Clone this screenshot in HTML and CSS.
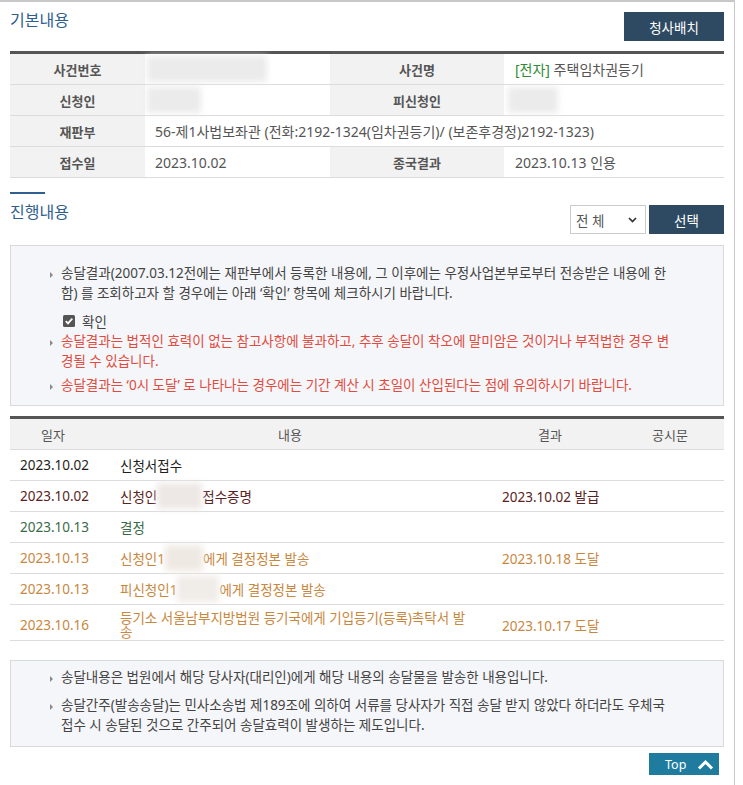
FILE: index.html
```html
<!DOCTYPE html>
<html lang="ko">
<head>
<meta charset="utf-8">
<title>사건 진행내용</title>
<link rel="stylesheet" href="styles.css">
</head>
<body>
<div class="page">
  <div class="sec-head">
    <h2 class="sec-title">기본내용</h2>
    <button class="btn-navy btn-wide" type="button">청사배치</button>
  </div>

  <div class="info-table">
    <div class="info-row">
      <div class="th">사건번호</div>
      <div class="td td-blur"><span class="blur blur-case"></span></div>
      <div class="th">사건명</div>
      <div class="td td-r"><span class="green">[전자]</span>&nbsp;주택임차권등기</div>
    </div>
    <div class="info-row">
      <div class="th">신청인</div>
      <div class="td td-blur"><span class="blur blur-app"></span></div>
      <div class="th">피신청인</div>
      <div class="td td-blur"><span class="blur blur-resp"></span></div>
    </div>
    <div class="info-row">
      <div class="th">재판부</div>
      <div class="td span3">56-제1사법보좌관 (전화:2192-1324(임차권등기)/ (보존후경정)2192-1323)</div>
    </div>
    <div class="info-row">
      <div class="th">접수일</div>
      <div class="td">2023.10.02</div>
      <div class="th">종국결과</div>
      <div class="td td-r">2023.10.13 인용</div>
    </div>
  </div>

  <div class="sec-head2">
    <div class="title2"><h2 class="sec-title">진행내용</h2></div>
    <div class="controls">
      <div class="select"><span>전 체</span>
        <svg class="sel-chev" width="9" height="6" viewBox="0 0 9 6"><path d="M1 1 L4.5 4.5 L8 1" fill="none" stroke="#333" stroke-width="1.7"/></svg>
      </div>
      <button class="btn-navy btn-sel" type="button">선택</button>
    </div>
  </div>

  <div class="notice">
    <ul class="notes">
      <li>송달결과(2007.03.12전에는 재판부에서 등록한 내용에, 그 이후에는 우정사업본부로부터 전송받은 내용에 한<br>함) 를 조회하고자 할 경우에는 아래 ‘확인’ 항목에 체크하시기 바랍니다.</li>
    </ul>
    <label class="chk">
      <svg class="chk-box" width="12" height="12" viewBox="0 0 12 12"><rect x="0" y="0" width="12" height="12" rx="1.5" fill="#555"/><path d="M2.8 6.2 L5 8.4 L9.3 3.6" fill="none" stroke="#fff" stroke-width="1.8"/></svg>
      <span>확인</span>
    </label>
    <ul class="notes red">
      <li>송달결과는 법적인 효력이 없는 참고사항에 불과하고, 추후 송달이 착오에 말미암은 것이거나 부적법한 경우 변<br>경될 수 있습니다.</li>
      <li>송달결과는 ‘0시 도달’ 로 나타나는 경우에는 기간 계산 시 초일이 산입된다는 점에 유의하시기 바랍니다.</li>
    </ul>
  </div>

  <div class="prog">
    <div class="prog-row prog-head">
      <div>일자</div><div>내용</div><div>결과</div><div>공시문</div>
    </div>
    <div class="prog-row c-black">
      <div class="d">2023.10.02</div><div class="c">신청서접수</div><div class="r"></div><div></div>
    </div>
    <div class="prog-row c-maroon">
      <div class="d">2023.10.02</div><div class="c">신청인<span class="blur blur-r2"></span>접수증명</div><div class="r">2023.10.02 발급</div><div></div>
    </div>
    <div class="prog-row c-green">
      <div class="d">2023.10.13</div><div class="c">결정</div><div class="r"></div><div></div>
    </div>
    <div class="prog-row c-orange">
      <div class="d">2023.10.13</div><div class="c">신청인1<span class="blur blur-r4"></span>에게 결정정본 발송</div><div class="r">2023.10.18 도달</div><div></div>
    </div>
    <div class="prog-row c-orange">
      <div class="d">2023.10.13</div><div class="c">피신청인1<span class="blur blur-r5"></span>에게 결정정본 발송</div><div class="r"></div><div></div>
    </div>
    <div class="prog-row c-orange prog-tall">
      <div class="d">2023.10.16</div><div class="c c2">등기소 서울남부지방법원 등기국에게 기입등기(등록)촉탁서 발<br>송</div><div class="r">2023.10.17 도달</div><div></div>
    </div>
  </div>

  <div class="notice notice2">
    <ul class="notes">
      <li>송달내용은 법원에서 해당 당사자(대리인)에게 해당 내용의 송달물을 발송한 내용입니다.</li>
      <li>송달간주(발송송달)는 민사소송법 제189조에 의하여 서류를 당사자가 직접 송달 받지 않았다 하더라도 우체국<br>접수 시 송달된 것으로 간주되어 송달효력이 발생하는 제도입니다.</li>
    </ul>
  </div>

  <div class="top-row">
    <a class="top-btn" href="#">Top
      <svg class="top-chev" width="17" height="11" viewBox="0 0 17 11"><path d="M2 9.5 L8.5 3 L15 9.5" fill="none" stroke="#fff" stroke-width="3"/></svg>
    </a>
  </div>
</div>
</body>
</html>
```

FILE: styles.css
```css
body {
  margin: 0;
  background: #fff;
  color: #444;
  font-family: "Noto Sans", "Noto Sans CJK KR", sans-serif;
}

.page {
  width: 714px;
  min-height: 783px;
  padding: 0 10px;
  border-top: 2px solid #c8c8c8;
  border-right: 1px solid #c8c8c8;
}

.sec-head {
  display: flex;
  justify-content: space-between;
  align-items: flex-start;
  margin-top: 8px;
}

.sec-title {
  margin: 0;
  font-size: 16px;
  line-height: 20px;
  font-weight: normal;
  color: #2f5f8e;
}

.btn-navy {
  border: 0;
  padding: 0;
  height: 29px;
  background: #2d4a62;
  color: #fff;
  font-family: inherit;
  font-size: 13.5px;
}

.btn-wide {
  width: 100px;
  margin-top: 2px;
}

/* basic info table */
.info-table {
  margin-top: 10px;
  border-top: 3px solid #555;
}

.info-row {
  display: grid;
  grid-template-columns: 135px 185px 174px 220px;
  height: 31px;
  box-sizing: border-box;
  border-bottom: 1px solid #dcdcdc;
}

.th {
  display: flex;
  align-items: center;
  justify-content: center;
  background: #f2f2f2;
  font-size: 13px;
  font-weight: bold;
  color: #555;
}

.td {
  display: flex;
  align-items: center;
  padding-left: 10px;
  font-size: 14px;
  color: #555;
  white-space: nowrap;
}

.td-r { padding-left: 11px; }
.td-blur { padding-left: 0; }
.span3 { grid-column: span 3; }
.green { color: #2e8a34; }

.blur {
  display: inline-block;
  height: 26px;
  vertical-align: middle;
  background: #ebebeb;
  filter: blur(3px);
}

.blur-case { width: 120px; margin-left: 2px; }
.blur-app { width: 54px; margin-left: 2px; }
.blur-resp { width: 50px; margin-left: 4px; }
.blur-r2 { width: 45px; background: #ede8e5; }
.blur-r4 { width: 38px; background: #efe9e3; }
.blur-r5 { width: 42px; background: #f0ece8; }

/* progress head */
.sec-head2 {
  display: flex;
  justify-content: space-between;
  align-items: flex-start;
  margin-top: 14px;
}

.title2::before {
  content: "";
  display: block;
  width: 35px;
  height: 2px;
  margin-bottom: 8px;
  background: #2f5f8e;
}

.controls {
  display: flex;
  gap: 3px;
  margin-top: 13px;
}

.select {
  width: 76px;
  height: 29px;
  box-sizing: border-box;
  display: flex;
  align-items: center;
  justify-content: space-between;
  padding: 0 8px 0 5px;
  border: 1px solid #ccc;
  background: #fff;
  font-size: 13.5px;
  color: #555;
}

.btn-sel { width: 75px; }

/* notice boxes */
.notice {
  margin-top: 11px;
  padding: 17px 30px 10px 39px;
  border: 1px solid #dadada;
  background: #f5f6f9;
  font-size: 13.5px;
  color: #444;
}

.notes {
  list-style: none;
  margin: 0;
  padding: 0;
}

.notes li {
  line-height: 20px;
  padding-left: 11px;
  text-indent: -11px;
  white-space: nowrap;
}

.notes li::before {
  content: "";
  display: inline-block;
  width: 0;
  height: 0;
  margin-right: 8px;
  border-left: 3px solid #8a8a8a;
  border-top: 3px solid transparent;
  border-bottom: 3px solid transparent;
  text-indent: 0;
}

.red { color: #e04b3e; }
.red li + li { margin-top: 4px; }

.chk {
  display: flex;
  align-items: center;
  height: 20px;
  margin-top: 8px;
  padding-left: 13px;
}

.chk-box { margin-right: 7px; }

/* progress table */
.prog {
  margin-top: 10px;
  border-top: 3px solid #555;
}

.prog-row {
  display: grid;
  grid-template-columns: 86px 388px 132px 108px;
  align-items: center;
  height: 31px;
  box-sizing: border-box;
  border-bottom: 1px solid #dcdcdc;
  font-size: 13.5px;
}

.prog-head {
  background: #f2f2f2;
  font-size: 13px;
  color: #555;
  text-align: center;
}

.prog-tall {
  height: 36px;
  padding-top: 5px;
}

.d { padding-left: 10px; }
.c { padding-left: 24px; white-space: nowrap; display: flex; align-items: center; }
.c2 { display: block; line-height: 14px; }
.r { padding-left: 18px; }

.c-black { color: #1e1e1e; }
.c-maroon { color: #5a2222; }
.c-green { color: #3a6a48; }
.c-orange { color: #c8873e; }

.notice2 {
  margin-top: 19px;
  padding: 6px 20px 11px 39px;
}

.notice2 li + li { margin-top: 8px; }

/* top button */
.top-row {
  display: flex;
  justify-content: flex-end;
  margin-top: 6px;
  padding-right: 5px;
}

.top-btn {
  display: flex;
  align-items: center;
  width: 70px;
  height: 22px;
  box-sizing: border-box;
  padding-left: 16px;
  background: #1f7c9f;
  color: #fff;
  font-size: 12.5px;
  text-decoration: none;
}

.top-chev { margin-left: 11px; }
```
